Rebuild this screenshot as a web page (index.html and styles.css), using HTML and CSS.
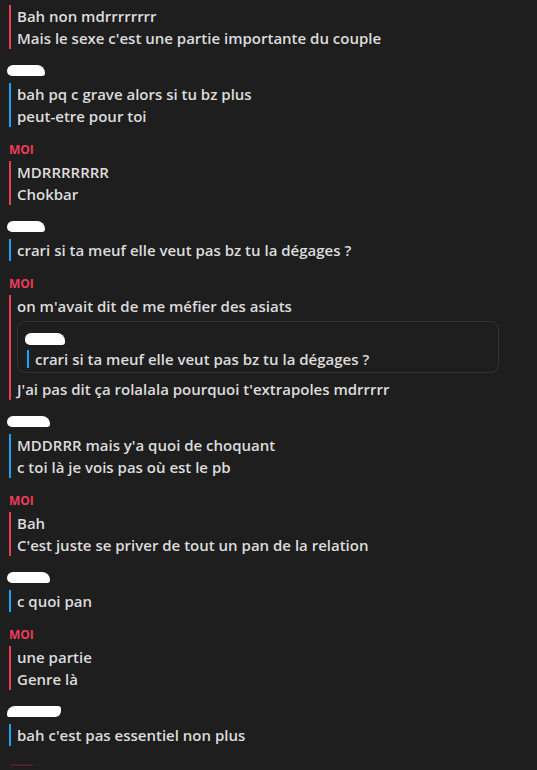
FILE: index.html
```html
<!DOCTYPE html>
<html lang="fr">
<head>
    <meta charset="UTF-8">
    <meta name="viewport" content="width=device-width, initial-scale=1.0">
    <title>Conversation</title>
    <link rel="stylesheet" href="styles.css">
</head>
<body>
    <div class="chat">
        <div class="msg me">
            <div class="lines">
                <p>Bah non mdrrrrrrrr</p>
                <p>Mais le sexe c'est une partie importante du couple</p>
            </div>
        </div>

        <div class="msg them">
            <div class="author"><span class="redacted" style="width: 38px"></span></div>
            <div class="lines">
                <p>bah pq c grave alors si tu bz plus</p>
                <p>peut-etre pour toi</p>
            </div>
        </div>

        <div class="msg me">
            <div class="author">MOI</div>
            <div class="lines">
                <p>MDRRRRRRR</p>
                <p>Chokbar</p>
            </div>
        </div>

        <div class="msg them">
            <div class="author"><span class="redacted" style="width: 38px"></span></div>
            <div class="lines">
                <p>crari si ta meuf elle veut pas bz tu la dégages ?</p>
            </div>
        </div>

        <div class="msg me">
            <div class="author">MOI</div>
            <div class="lines">
                <p>on m'avait dit de me méfier des asiats</p>
                <div class="quote">
                    <div class="author"><span class="redacted" style="width: 40px"></span></div>
                    <div class="lines">
                        <p>crari si ta meuf elle veut pas bz tu la dégages ?</p>
                    </div>
                </div>
                <p>J'ai pas dit ça rolalala pourquoi t'extrapoles mdrrrrr</p>
            </div>
        </div>

        <div class="msg them">
            <div class="author"><span class="redacted" style="width: 43px"></span></div>
            <div class="lines">
                <p>MDDRRR mais y'a quoi de choquant</p>
                <p>c toi là je vois pas où est le pb</p>
            </div>
        </div>

        <div class="msg me">
            <div class="author">MOI</div>
            <div class="lines">
                <p>Bah</p>
                <p>C'est juste se priver de tout un pan de la relation</p>
            </div>
        </div>

        <div class="msg them">
            <div class="author"><span class="redacted" style="width: 43px"></span></div>
            <div class="lines">
                <p>c quoi pan</p>
            </div>
        </div>

        <div class="msg me">
            <div class="author">MOI</div>
            <div class="lines">
                <p>une partie</p>
                <p>Genre là</p>
            </div>
        </div>

        <div class="msg them">
            <div class="author"><span class="redacted wide" style="width: 54px"></span></div>
            <div class="lines">
                <p>bah c'est pas essentiel non plus</p>
            </div>
        </div>

        <!-- next message, cut off by the bottom edge -->
        <div class="msg me">
            <div class="author"><span class="ghost"></span></div>
        </div>
    </div>
</body>
</html>
```

FILE: styles.css
```css
html {
    background-color: #1e1e1e;
}

body {
    margin: 0;
    padding: 5px 0 0 9px;
    height: 765px;
    overflow: hidden;
    font-family: "Open Sans", "Noto Sans", sans-serif;
    font-weight: 600;
    color: #dcdcdc;
}

.chat {
    display: flex;
    flex-direction: column;
    gap: 12px;
}

p {
    margin: 0;
    font-size: 15px;
    line-height: 22px;
}

.author {
    height: 22px;
    padding-top: 4px;
    box-sizing: border-box;
    font-size: 12px;
    line-height: 14px;
    font-weight: 700;
}

.me > .author {
    color: #ef3b55;
}

.redacted {
    display: block;
    height: 11px;
    margin-left: -2px;
    background-color: #fff;
    border-radius: 6px 8px 3px 5px;
}

.redacted.wide {
    border-radius: 8px 3px 6px 2px;
}

.ghost {
    display: block;
    width: 23px;
    height: 2px;
    margin: 2px 0 0 1px;
    background-color: #4a2028;
}

.lines {
    border-left: 2px solid;
    padding-left: 6px;
}

.me > .lines {
    border-color: #ef3b55;
}

.them > .lines {
    border-color: #1aa3f5;
}

/* quoted message inside a reply */
.quote {
    width: 463px;
    margin: 4px 0 5px;
    padding: 8px 8px 4px 9px;
    border: 1px solid #333;
    border-radius: 8px;
}

.quote .author {
    height: 20px;
    padding-top: 3px;
}

.quote .redacted {
    height: 12px;
    margin-left: -2px;
}

.quote .lines {
    border-color: #1aa3f5;
}

.quote p {
    line-height: 18px;
}
```
